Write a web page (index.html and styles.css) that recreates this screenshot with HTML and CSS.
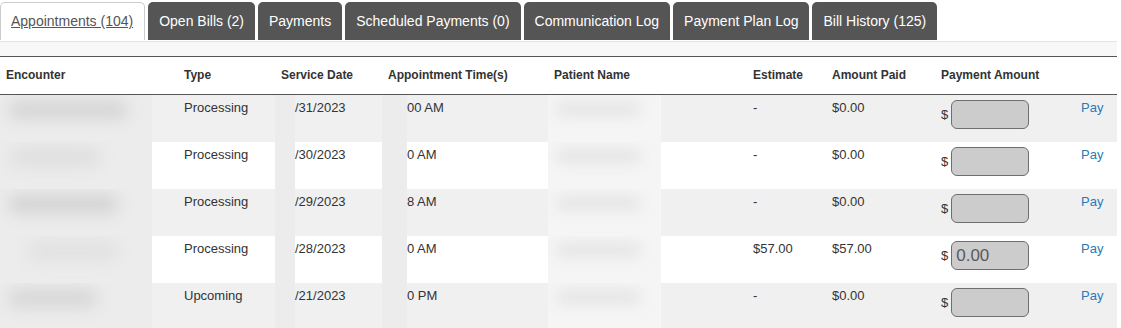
FILE: index.html
```html
<!DOCTYPE html>
<html>
<head>
<meta charset="utf-8">
<link rel="stylesheet" href="styles.css">
</head>
<body>
<div class="page">
  <ul class="tabs">
    <li class="tab active"><a href="#">Appointments (104)</a></li>
    <li class="tab">Open Bills (2)</li>
    <li class="tab">Payments</li>
    <li class="tab">Scheduled Payments (0)</li>
    <li class="tab">Communication Log</li>
    <li class="tab">Payment Plan Log</li>
    <li class="tab">Bill History (125)</li>
  </ul>
  <div class="band"></div>
  <div class="grid">
    <div class="row head">
      <div class="cell">Encounter</div>
      <div class="cell">Type</div>
      <div class="cell">Service Date</div>
      <div class="cell">Appointment Time(s)</div>
      <div class="cell">Patient Name</div>
      <div class="cell">Estimate</div>
      <div class="cell">Amount Paid</div>
      <div class="cell">Payment Amount</div>
      <div class="cell"></div>
    </div>

    <div class="row odd">
      <div class="enc"><span class="blob b1"></span></div>
      <div class="cell">Processing</div>
      <div class="masked"><span class="strip s-date"></span><span class="txt">/31/2023</span></div>
      <div class="masked"><span class="strip s-time"></span><span class="txt">00 AM</span></div>
      <div class="pat"><div class="patblur"><span class="pblob"></span></div></div>
      <div class="cell">-</div>
      <div class="cell">$0.00</div>
      <div class="pay"><span>$</span><input class="amt" type="text" value=""></div>
      <div class="cell"><a class="link" href="#">Pay</a></div>
    </div>

    <div class="row even">
      <div class="enc"><span class="blob b2"></span></div>
      <div class="cell">Processing</div>
      <div class="masked"><span class="strip s-date"></span><span class="txt">/30/2023</span></div>
      <div class="masked"><span class="strip s-time"></span><span class="txt">0 AM</span></div>
      <div class="pat"><div class="patblur"><span class="pblob"></span></div></div>
      <div class="cell">-</div>
      <div class="cell">$0.00</div>
      <div class="pay"><span>$</span><input class="amt" type="text" value=""></div>
      <div class="cell"><a class="link" href="#">Pay</a></div>
    </div>

    <div class="row odd">
      <div class="enc"><span class="blob b3"></span></div>
      <div class="cell">Processing</div>
      <div class="masked"><span class="strip s-date"></span><span class="txt">/29/2023</span></div>
      <div class="masked"><span class="strip s-time"></span><span class="txt">8 AM</span></div>
      <div class="pat"><div class="patblur"><span class="pblob"></span></div></div>
      <div class="cell">-</div>
      <div class="cell">$0.00</div>
      <div class="pay"><span>$</span><input class="amt" type="text" value=""></div>
      <div class="cell"><a class="link" href="#">Pay</a></div>
    </div>

    <div class="row even">
      <div class="enc"><span class="blob b4"></span></div>
      <div class="cell">Processing</div>
      <div class="masked"><span class="strip s-date"></span><span class="txt">/28/2023</span></div>
      <div class="masked"><span class="strip s-time"></span><span class="txt">0 AM</span></div>
      <div class="pat"><div class="patblur"><span class="pblob"></span></div></div>
      <div class="cell">$57.00</div>
      <div class="cell">$57.00</div>
      <div class="pay"><span>$</span><input class="amt" type="text" value="0.00"></div>
      <div class="cell"><a class="link" href="#">Pay</a></div>
    </div>

    <div class="row odd">
      <div class="enc"><span class="blob b5"></span></div>
      <div class="cell">Upcoming</div>
      <div class="masked"><span class="strip s-date"></span><span class="txt">/21/2023</span></div>
      <div class="masked"><span class="strip s-time"></span><span class="txt">0 PM</span></div>
      <div class="pat"><div class="patblur"><span class="pblob"></span></div></div>
      <div class="cell">-</div>
      <div class="cell">$0.00</div>
      <div class="pay"><span>$</span><input class="amt" type="text" value=""></div>
      <div class="cell"><a class="link" href="#">Pay</a></div>
    </div>
  </div>
</div>
</body>
</html>
```

FILE: styles.css
```css
html, body {
  margin: 0;
  padding: 0;
  background: #ffffff;
}
body {
  font-family: "Liberation Sans", Arial, Helvetica, sans-serif;
  font-size: 13px;
  color: #333333;
  overflow: hidden;
}
.page {
  width: 1117px;
}
.tabs {
  list-style: none;
  margin: 0;
  padding: 2px 0 0 0;
  display: flex;
  gap: 3px;
  height: 38px;
  font-size: 14px;
}
.tab {
  height: 38px;
  line-height: 38px;
  padding: 0 11px;
  background: #555555;
  color: #ffffff;
  border-radius: 5px 5px 0 0;
  white-space: nowrap;
  box-sizing: border-box;
}
.tab.active {
  background: #ffffff;
  border: 1px solid #cccccc;
  border-bottom: none;
  padding: 0 11px 0 10px;
  line-height: 37px;
}
.tab.active a {
  color: #555555;
  text-decoration: underline;
}
.band {
  margin-top: 1px;
  height: 14px;
  background: #f8f8f8;
  border-top: 1px solid #e3e3e3;
}
.grid {
  border-top: 1px solid #555555;
}
.row {
  display: grid;
  grid-template-columns: 178px 97px 107px 166px 199px 79px 109px 140px 42px;
  height: 47px;
}
.row.head {
  height: 37px;
  border-bottom: 1px solid #555555;
  font-weight: bold;
  font-size: 12px;
}
.row.head .cell {
  padding-top: 0;
  line-height: 37px;
}
.row.odd {
  background: #f0f0f0;
}
.row.even {
  background: #ffffff;
}
.cell {
  padding: 5px 0 0 6px;
  white-space: nowrap;
}
.enc {
  width: 152px;
  height: 47px;
  background: #ececec;
  position: relative;
  overflow: hidden;
}
.blob {
  position: absolute;
  top: 6px;
  height: 18px;
  background: #dcdcdc;
  border-radius: 10px;
  filter: blur(8px);
}
.b1 { left: 8px; width: 120px; background: #d4d4d4; }
.b2 { left: 10px; width: 90px; background: #dedede; }
.b3 { left: 8px; width: 110px; background: #d2d2d2; }
.b4 { left: 28px; width: 90px; background: #e0e0e0; }
.b5 { left: 8px; width: 90px; background: #d6d6d6; }
.masked {
  display: flex;
  align-items: flex-start;
  white-space: nowrap;
}
.strip {
  align-self: stretch;
  background: #ececec;
  flex: none;
}
.s-date { width: 20px; }
.s-time { width: 25px; }
.txt {
  padding-top: 5px;
}
.pat {
  display: flex;
}
.patblur {
  width: 113px;
  height: 47px;
  background: #f5f5f5;
  position: relative;
  overflow: hidden;
}
.pblob {
  position: absolute;
  left: 8px;
  top: 7px;
  width: 85px;
  height: 14px;
  background: #e4e4e4;
  border-radius: 8px;
  filter: blur(7px);
}
.pay {
  display: flex;
  align-items: flex-start;
  padding: 5px 0 0 6px;
}
.pay span {
  margin-top: 7px;
  line-height: 15px;
}
.amt {
  margin: 0 0 0 3px;
  width: 78px;
  height: 29px;
  box-sizing: border-box;
  background: #cccccc;
  border: 1px solid #6e6e6e;
  border-radius: 6px;
  padding: 0 4px;
  font-family: "Liberation Sans", Arial, Helvetica, sans-serif;
  font-size: 17px;
  color: #5a5a5a;
  outline: none;
}
.link {
  color: #2a7ab8;
  text-decoration: none;
}
```
